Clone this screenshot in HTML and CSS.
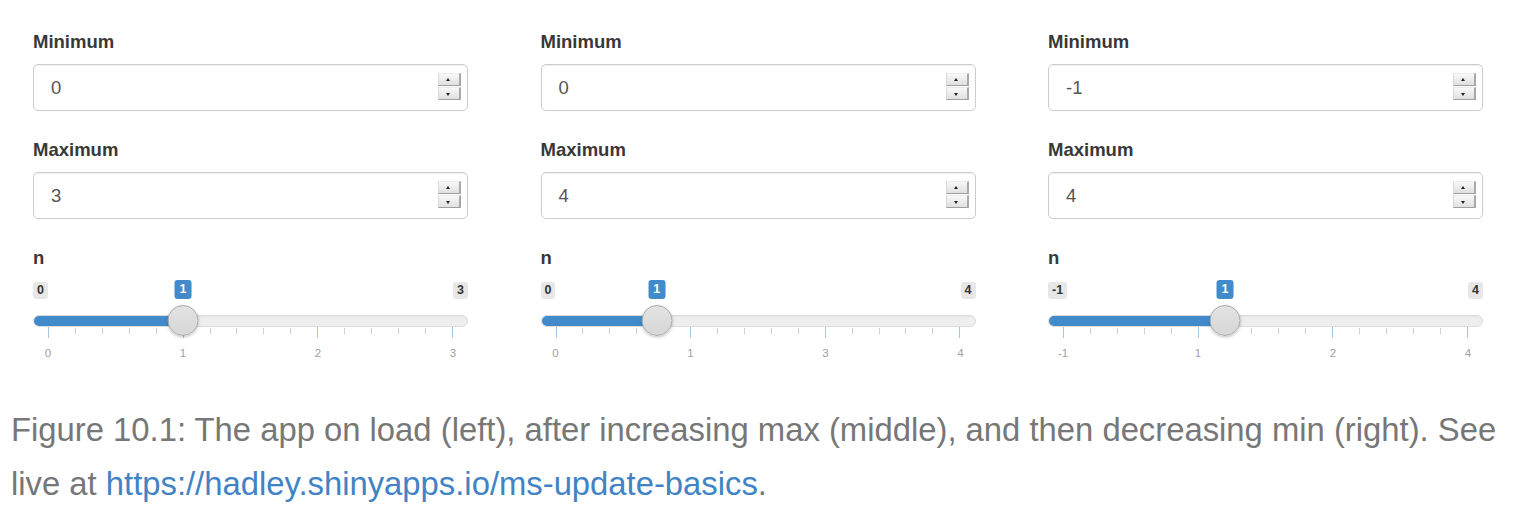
FILE: index.html
```html
<!DOCTYPE html>
<html>
<head>
<meta charset="utf-8">
<link rel="stylesheet" href="styles.css">
</head>
<body>
<div class="panels">
  <div class="panel">
    <div class="group">
      <label class="lbl">Minimum</label>
      <div class="num-input"><span class="val">0</span><span class="spin"><span class="up"></span><span class="down"></span></span></div>
    </div>
    <div class="group">
      <label class="lbl">Maximum</label>
      <div class="num-input"><span class="val">3</span><span class="spin"><span class="up"></span><span class="down"></span></span></div>
    </div>
    <label class="lbl">n</label>
    <div class="slider">
      <div class="ends"><span class="tag">0</span><span class="tag">3</span></div>
      <div class="track"><div class="fill" style="width: calc(15px + (100% - 30px) * 0.3333)"></div></div>
      <div class="ticks"><i class="maj"></i><i></i><i></i><i></i><i></i><i class="maj"></i><i></i><i></i><i></i><i></i><i class="maj"></i><i></i><i></i><i></i><i></i><i class="maj"></i></div>
      <div class="nums"><span>0</span><span>1</span><span>2</span><span>3</span></div>
      <span class="bubble" style="left: calc(15px + (100% - 30px) * 0.3333)">1</span>
      <span class="handle" style="left: calc(15px + (100% - 30px) * 0.3333)"></span>
    </div>
  </div>
  <div class="panel">
    <div class="group">
      <label class="lbl">Minimum</label>
      <div class="num-input"><span class="val">0</span><span class="spin"><span class="up"></span><span class="down"></span></span></div>
    </div>
    <div class="group">
      <label class="lbl">Maximum</label>
      <div class="num-input"><span class="val">4</span><span class="spin"><span class="up"></span><span class="down"></span></span></div>
    </div>
    <label class="lbl">n</label>
    <div class="slider">
      <div class="ends"><span class="tag">0</span><span class="tag">4</span></div>
      <div class="track"><div class="fill" style="width: calc(15px + (100% - 30px) * 0.25)"></div></div>
      <div class="ticks"><i class="maj"></i><i></i><i></i><i></i><i></i><i class="maj"></i><i></i><i></i><i></i><i></i><i class="maj"></i><i></i><i></i><i></i><i></i><i class="maj"></i></div>
      <div class="nums"><span>0</span><span>1</span><span>3</span><span>4</span></div>
      <span class="bubble" style="left: calc(15px + (100% - 30px) * 0.25)">1</span>
      <span class="handle" style="left: calc(15px + (100% - 30px) * 0.25)"></span>
    </div>
  </div>
  <div class="panel">
    <div class="group">
      <label class="lbl">Minimum</label>
      <div class="num-input"><span class="val">-1</span><span class="spin"><span class="up"></span><span class="down"></span></span></div>
    </div>
    <div class="group">
      <label class="lbl">Maximum</label>
      <div class="num-input"><span class="val">4</span><span class="spin"><span class="up"></span><span class="down"></span></span></div>
    </div>
    <label class="lbl">n</label>
    <div class="slider">
      <div class="ends"><span class="tag">-1</span><span class="tag">4</span></div>
      <div class="track"><div class="fill" style="width: calc(15px + (100% - 30px) * 0.4)"></div></div>
      <div class="ticks"><i class="maj"></i><i></i><i></i><i></i><i></i><i class="maj"></i><i></i><i></i><i></i><i></i><i class="maj"></i><i></i><i></i><i></i><i></i><i class="maj"></i></div>
      <div class="nums"><span>-1</span><span>1</span><span>2</span><span>4</span></div>
      <span class="bubble" style="left: calc(15px + (100% - 30px) * 0.4)">1</span>
      <span class="handle" style="left: calc(15px + (100% - 30px) * 0.4)"></span>
    </div>
  </div>
</div>
<p class="caption">Figure 10.1: The app on load (left), after increasing max (middle), and then decreasing min (right). See live at <a href="#">https://hadley.shinyapps.io/ms-update-basics</a>.</p>
</body>
</html>
```

FILE: styles.css
```css
html, body {
  margin: 0;
  padding: 0;
  background: #ffffff;
}

body {
  font-family: "Liberation Sans", Arial, sans-serif;
  color: #333333;
}

.panels {
  display: grid;
  grid-template-columns: repeat(3, 435px);
  column-gap: 72.5px;
  padding: 31px 0 0 33px;
}

.panel {
  display: flex;
  flex-direction: column;
}

.group {
  display: flex;
  flex-direction: column;
  margin-bottom: 28px;
}

.lbl {
  display: block;
  font-size: 18.5px;
  line-height: 22px;
  font-weight: 700;
  color: #383838;
}

.num-input {
  margin-top: 11px;
  height: 47px;
  box-sizing: border-box;
  border: 1px solid #cccccc;
  border-radius: 5px;
  box-shadow: inset 0 1px 1px rgba(0, 0, 0, 0.06);
  display: flex;
  align-items: center;
  justify-content: space-between;
  padding: 0 6px 0 17px;
}

.val {
  font-size: 18.5px;
  color: #555555;
}

.spin {
  display: flex;
  flex-direction: column;
  width: 23px;
  gap: 1px;
  margin-top: -2px;
}

.up, .down {
  position: relative;
  display: block;
  height: 13px;
  box-sizing: border-box;
  background: linear-gradient(#f8f8f8, #e0e0e0);
  border-left: 1px solid #d8d8d8;
  border-top: 1px solid #ececec;
  border-right: 2px solid #a8a8a8;
  border-bottom: 1px solid #a0a0a0;
}

.up::after, .down::after {
  content: "";
  position: absolute;
  left: 50%;
  top: 50%;
  margin-left: -3px;
  width: 0;
  height: 0;
  border-left: 2.5px solid transparent;
  border-right: 2.5px solid transparent;
}

.up::after {
  margin-top: -2px;
  border-bottom: 3px solid #222222;
}

.down::after {
  margin-top: -1px;
  border-top: 3px solid #222222;
}

.slider {
  position: relative;
  margin-top: 11px;
  height: 80px;
}

.ends {
  display: flex;
  justify-content: space-between;
  margin-top: 2px;
  height: 17px;
}

.tag, .bubble {
  display: block;
  height: 17px;
  line-height: 17px;
  padding: 0 4px;
  border-radius: 3px;
  font-size: 12.5px;
  font-weight: 700;
}

.tag {
  background: #e7e7e7;
  color: #333333;
}

.bubble {
  position: absolute;
  top: 0;
  height: 19px;
  line-height: 19px;
  padding: 0 5px;
  transform: translateX(-50%);
  background: #428bca;
  color: #ffffff;
}

.track {
  margin-top: 16px;
  height: 12px;
  box-sizing: border-box;
  border: 1px solid #dddddd;
  border-radius: 6px;
  background: #eeeeee;
  box-shadow: inset 0 1px 1px rgba(0, 0, 0, 0.04);
  overflow: hidden;
}

.fill {
  height: 100%;
  background: #428bca;
  margin: -1px 0 0 -1px;
  padding: 1px 0 1px 1px;
}

.ticks {
  display: flex;
  justify-content: space-between;
  padding: 0 15px;
  height: 11px;
}

.ticks i {
  display: block;
  width: 1px;
  height: 6px;
  margin-top: 1px;
  background: #cfcfcf;
}

.ticks i.maj {
  height: 11px;
  margin-top: 0;
  background: #a7c6e4;
}

.nums {
  display: flex;
  justify-content: space-between;
  margin-top: 8px;
}

.nums span {
  width: 30px;
  text-align: center;
  font-size: 11.5px;
  line-height: 14px;
  color: #a0a0a0;
}

.handle {
  position: absolute;
  top: 25px;
  width: 31px;
  height: 31px;
  box-sizing: border-box;
  transform: translateX(-50%);
  border-radius: 50%;
  border: 1px solid #aaaaaa;
  background: linear-gradient(#e3e3e3, #d6d6d6);
  box-shadow: 0 1px 3px rgba(0, 0, 0, 0.25);
}

.caption {
  margin: 43px 0 0 11px;
  width: 1500px;
  font-size: 32.8px;
  line-height: 54px;
  color: #777777;
}

.caption a {
  color: #4183c4;
  text-decoration: none;
}
```
